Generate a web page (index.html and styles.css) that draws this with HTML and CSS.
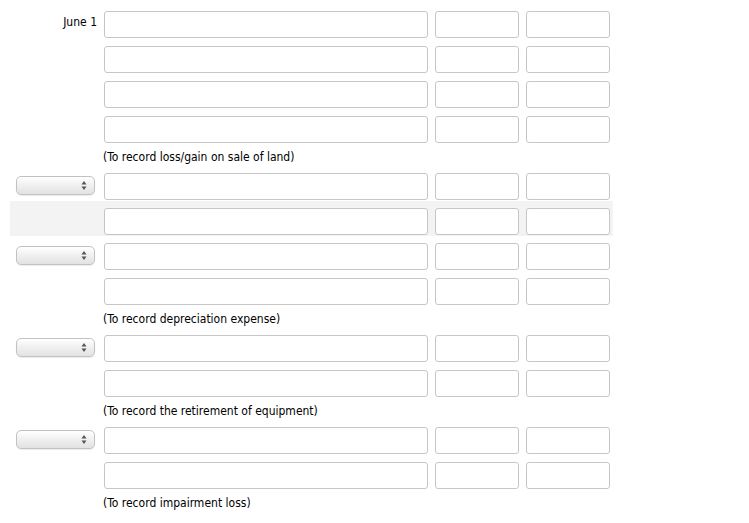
FILE: index.html
```html
<!DOCTYPE html>
<html>
<head>
<meta charset="utf-8">
<link rel="stylesheet" href="styles.css">
</head>
<body>
<div class="sheet">
  <div class="row">
    <div class="lab">June 1</div>
    <input class="f w" type="text"><input class="f n" type="text"><input class="f n" type="text">
  </div>
  <div class="row">
    <div class="lab"></div>
    <input class="f w" type="text"><input class="f n" type="text"><input class="f n" type="text">
  </div>
  <div class="row">
    <div class="lab"></div>
    <input class="f w" type="text"><input class="f n" type="text"><input class="f n" type="text">
  </div>
  <div class="row">
    <div class="lab"></div>
    <input class="f w" type="text"><input class="f n" type="text"><input class="f n" type="text">
  </div>
  <div class="cap">(To record loss/gain on sale of land)</div>

  <div class="row">
    <div class="lab"><span class="sel"><select class="dd"><option></option></select><svg class="arr" width="6" height="11" viewBox="0 0 6 11"><path d="M3 1 L5.5 4.5 H0.5 Z M3 10 L5.5 6.5 H0.5 Z" fill="#555"/></svg></span></div>
    <input class="f w" type="text"><input class="f n" type="text"><input class="f n" type="text">
  </div>
  <div class="row hl">
    <div class="lab"></div>
    <input class="f w" type="text"><input class="f n" type="text"><input class="f n" type="text">
  </div>
  <div class="row">
    <div class="lab"><span class="sel"><select class="dd"><option></option></select><svg class="arr" width="6" height="11" viewBox="0 0 6 11"><path d="M3 1 L5.5 4.5 H0.5 Z M3 10 L5.5 6.5 H0.5 Z" fill="#555"/></svg></span></div>
    <input class="f w" type="text"><input class="f n" type="text"><input class="f n" type="text">
  </div>
  <div class="row">
    <div class="lab"></div>
    <input class="f w" type="text"><input class="f n" type="text"><input class="f n" type="text">
  </div>
  <div class="cap">(To record depreciation expense)</div>

  <div class="row">
    <div class="lab"><span class="sel"><select class="dd"><option></option></select><svg class="arr" width="6" height="11" viewBox="0 0 6 11"><path d="M3 1 L5.5 4.5 H0.5 Z M3 10 L5.5 6.5 H0.5 Z" fill="#555"/></svg></span></div>
    <input class="f w" type="text"><input class="f n" type="text"><input class="f n" type="text">
  </div>
  <div class="row">
    <div class="lab"></div>
    <input class="f w" type="text"><input class="f n" type="text"><input class="f n" type="text">
  </div>
  <div class="cap">(To record the retirement of equipment)</div>

  <div class="row">
    <div class="lab"><span class="sel"><select class="dd"><option></option></select><svg class="arr" width="6" height="11" viewBox="0 0 6 11"><path d="M3 1 L5.5 4.5 H0.5 Z M3 10 L5.5 6.5 H0.5 Z" fill="#555"/></svg></span></div>
    <input class="f w" type="text"><input class="f n" type="text"><input class="f n" type="text">
  </div>
  <div class="row">
    <div class="lab"></div>
    <input class="f w" type="text"><input class="f n" type="text"><input class="f n" type="text">
  </div>
  <div class="cap">(To record impairment loss)</div>
</div>
</body>
</html>
```

FILE: styles.css
```css
html, body {
  margin: 0;
  padding: 0;
  background: #ffffff;
}
body {
  font-family: "DejaVu Sans Condensed", "DejaVu Sans", Tahoma, sans-serif;
  font-size: 12px;
  color: #000;
}
.sheet {
  margin-left: 10px;
  padding-top: 4px;
  width: 603px;
}
.row {
  display: flex;
  align-items: flex-start;
  height: 35px;
  box-sizing: border-box;
  padding: 7px 3px 0 0;
}
.row.hl {
  background: #f3f3f3;
}
.lab {
  width: 94px;
  flex: none;
  box-sizing: border-box;
  padding: 4px 7px 0 6px;
  text-align: right;
  line-height: 14px;
  height: 27px;
}
.f {
  flex: none;
  height: 27px;
  box-sizing: border-box;
  margin: 0;
  padding: 2px 4px;
  border: 1px solid #c6c6c6;
  border-radius: 3px;
  background: #fff;
  font: inherit;
  outline: none;
}
.w {
  width: 324px;
  margin-right: 7px;
}
.n {
  width: 84px;
}
.n + .n {
  margin-left: 7px;
}
.sel {
  position: relative;
  display: block;
  width: 79px;
  height: 19px;
  margin-top: -1px;
}
.dd {
  -webkit-appearance: none;
  appearance: none;
  display: block;
  width: 79px;
  height: 19px;
  margin: 0;
  padding: 0;
  box-sizing: border-box;
  border: 1px solid #c2c2c2;
  border-radius: 5px;
  background: linear-gradient(#ffffff, #f1f1f1 45%, #e2e2e2);
  box-shadow: 0 1px 1px rgba(0,0,0,0.08);
  font: inherit;
}
.arr {
  position: absolute;
  right: 8px;
  top: 4px;
}
.cap {
  height: 22px;
  box-sizing: border-box;
  padding: 6px 0 0 93px;
  line-height: 14px;
  white-space: nowrap;
}
```
